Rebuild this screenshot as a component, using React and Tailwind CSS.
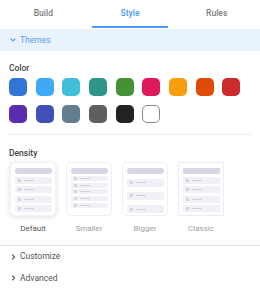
import React from "react";

const colors = [
  "#3375d6", "#3fa9f5", "#40bfd8", "#2e9688", "#459236", "#e0195f", "#f89d0e", "#e04b0a", "#cc2b2b",
  "#5a2db0", "#4150b8", "#627d8d", "#5f5f5f", "#222222",
];

function Row({ h, round }) {
  return (
    <div className={`flex items-center gap-[3px] bg-[#f0f0f6] pl-[3px] ${round ? "rounded-[2px]" : "rounded-[1px]"}`} style={{ height: h }}>
      <div className="w-[3px] h-[3px] bg-[#d6d6e2]" />
      <div className="w-[10px] h-[1px] bg-[#d0d0dc]" />
    </div>
  );
}

function DensityCard({ label, rows, rowH, gap, top, selected, classic }) {
  return (
    <div className="flex flex-col items-center w-[46px]">
      <div
        className={`w-[46px] h-[54px] bg-white border flex flex-col px-[3.5px] pt-[5px] ${
          classic ? "rounded-[1px] border-[#ececf2]" : "rounded-[5px] border-[#eeeef4]"
        } ${selected ? "shadow-[0_1px_5px_rgba(60,60,90,0.18)] border-[#f2f2f6]" : ""}`}
      >
        <div className={`h-[6px] bg-[#d7d7e5] ${classic ? "rounded-none" : "rounded-full"}`} />
        <div className="flex flex-col" style={{ marginTop: top, gap }}>
          {Array.from({ length: rows }).map((_, i) => (
            <Row key={i} h={rowH} round={!classic} />
          ))}
        </div>
      </div>
      <div className={`mt-[8px] text-[8px] leading-[10px] ${selected ? "text-[#555]" : "text-[#a0a0a6]"}`}>{label}</div>
    </div>
  );
}

export default function App() {
  return (
    <div className="w-[260px] h-[300px] bg-white overflow-hidden font-['Roboto',sans-serif]">
      <div className="flex h-[28px]">
        {["Build", "Style", "Rules"].map((t) => (
          <div key={t} className="flex-1 flex flex-col">
            <div
              className={`flex-1 flex items-center justify-center text-[8.5px] font-medium ${
                t === "Style" ? "text-[#4b9af5]" : "text-[#7c7c7c]"
              }`}
            >
              {t}
            </div>
            <div className={`h-[2px] mx-[5px] ${t === "Style" ? "bg-[#4b9af5]" : ""}`} />
          </div>
        ))}
      </div>
      <div className="mt-[1px] h-[22px] bg-[#e8f3fe] flex items-center pl-[10px] gap-[4px] text-[#5c9ef0] text-[8.5px]">
        <svg width="6" height="6" viewBox="0 0 6 6" fill="none">
          <path d="M1 2l2 2 2-2" stroke="#5c9ef0" strokeWidth="1.1" strokeLinecap="round" strokeLinejoin="round" />
        </svg>
        <span>Themes</span>
      </div>

      <div className="px-[9px] pt-[11px]">
        <div className="text-[8.5px] leading-[12px] font-medium text-[#444]">Color</div>
        <div className="mt-[4px] grid grid-cols-[repeat(9,18px)] gap-x-[8.67px] gap-y-[9px]">
          {colors.map((c) => (
            <div key={c} className="w-[18px] h-[18px] rounded-[5px]" style={{ backgroundColor: c }} />
          ))}
          <div className="w-[18px] h-[18px] rounded-[5px] border border-[#8a8a8a] bg-white" />
        </div>
        <div className="mt-[11px] h-[1px] bg-[#e9edf2]" />
        <div className="mt-[12px] text-[8.5px] leading-[12px] font-medium text-[#444]">Density</div>
      </div>

      <div className="flex gap-[10px] pl-[10px] mt-[3px]">
        <DensityCard label="Default" rows={4} rowH={7} gap={2.5} top={2.5} selected />
        <DensityCard label="Smaller" rows={5} rowH={5} gap={1.7} top={2} />
        <DensityCard label="Bigger" rows={3} rowH={8} gap={5.3} top={4.5} />
        <DensityCard label="Classic" rows={4} rowH={6.7} gap={2.8} top={3} classic />
      </div>

      <div className="mt-[11px] h-[1px] bg-[#e2e2e8]" />
      <div className="flex flex-col">
        {["Customize", "Advanced"].map((t) => (
          <div key={t} className="h-[21.5px] flex items-center pl-[11px] gap-[4px] text-[8.5px] text-[#555]">
            <svg width="5" height="6" viewBox="0 0 5 6" fill="none">
              <path d="M1.5 1l2 2-2 2" stroke="#555" strokeWidth="1.1" strokeLinecap="round" strokeLinejoin="round" />
            </svg>
            <span>{t}</span>
          </div>
        ))}
      </div>
    </div>
  );
}
